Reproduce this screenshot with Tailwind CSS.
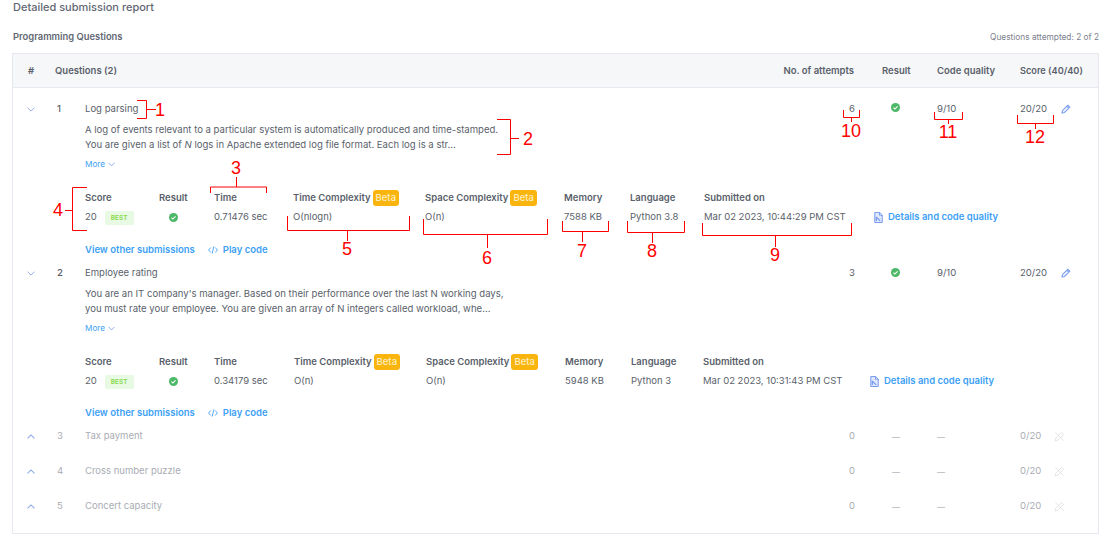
<!DOCTYPE html>
<html lang="en">
<head>
    <meta charset="UTF-8">
    <title>Detailed submission report</title>
    <script src="https://cdn.jsdelivr.net/npm/@tailwindcss/browser@4"></script>
</head>
<body class="bg-white font-['Inter',sans-serif] text-[#5a5f6b] overflow-hidden">
<svg class="hidden">
    <symbol id="check" viewBox="0 0 16 16"><circle cx="8" cy="8" r="8" fill="#4cb868"/><path d="M4.4 8.2l2.5 2.5 4.7-4.8" fill="none" stroke="#fff" stroke-width="2"/></symbol>
    <symbol id="pencil" viewBox="0 0 16 16"><path d="M11 2l3 3-8.6 8.6-3.8.9.8-3.9zM9.4 3.6l3 3" fill="none" stroke="currentColor" stroke-width="1.8" stroke-linejoin="round"/></symbol>
    <symbol id="nopencil" viewBox="0 0 16 16"><path d="M11 2l3 3-8.6 8.6-3.8.9.8-3.9zM2 2l12 12" fill="none" stroke="currentColor" stroke-width="1.1" stroke-linejoin="round"/></symbol>
    <symbol id="down" viewBox="0 0 10 6"><path d="M.7.7L5 5l4.3-4.3" fill="none" stroke="currentColor" stroke-width="1.1"/></symbol>
    <symbol id="up" viewBox="0 0 10 6"><path d="M.7 5.3L5 1l4.3 4.3" fill="none" stroke="currentColor" stroke-width="1.3"/></symbol>
    <symbol id="doc" viewBox="0 0 10 13"><path d="M.6.6h5.8l3 3v8.8H.6zM6.2.8v3h3" fill="#dfe7fb" stroke="currentColor" stroke-width="1.1"/><path d="M2.4 5.5v5M2.4 6l4.6 4.6" fill="none" stroke="currentColor" stroke-width="1.3"/></symbol>
    <symbol id="code" viewBox="0 0 10 8"><path d="M2.8 1.5L.6 4l2.2 2.5M7.2 1.5L9.4 4 7.2 6.5M5.8.5L4.2 7.5" fill="none" stroke="currentColor" stroke-width=".9"/></symbol>
</svg>

<div class="relative w-[1107px] h-[544px]">
    <div class="pl-[12px] pr-[8px] pt-[1px]">
        <h1 class="ml-[1px] h-[12px] text-[11px] leading-[12px] font-medium text-[#626773]">Detailed submission report</h1>
        <div class="mt-[18px] h-[12px] flex items-center justify-between">
            <h2 class="ml-[1px] text-[9.4px] font-semibold text-[#626773]">Programming Questions</h2>
            <span class="text-[8.3px] text-[#7c818c]">Questions attempted: 2 of 2</span>
        </div>

        <div class="mt-[10px] h-[481px] border border-[#e6e7ef]">
            <div class="grid grid-cols-[15px_27px_1fr_99px_55px_83px_78px] items-center h-[34px] pt-[1px] bg-[#f6f7f9] border-b border-[#e9eaf1] text-[9.5px] font-semibold text-[#5a5f6b]">
                <span class="col-start-2">#</span>
                <span>Questions (2)</span>
                <span class="pr-[28px] text-right">No. of attempts</span>
                <span>Result</span>
                <span>Code quality</span>
                <span class="text-[9.2px]">Score (40/40)</span>
            </div>

            <!-- question 1 -->
            <div class="h-[178px] text-[9.55px]">
                <div class="grid grid-cols-[44px_28px_1fr_99px_55px_83px_78px] pt-[14px] items-center leading-[14px]">
                    <svg class="ml-[14px] w-[8px] h-[5px] text-[#8aa6ea]"><use href="#down"/></svg>
                    <span class="font-medium">1</span>
                    <span>Log parsing</span>
                    <span class="pr-[27px] text-right">6</span>
                    <svg class="ml-[9px] -mt-[4px] w-[9px] h-[9px]"><use href="#check"/></svg>
                    <span>9/10</span>
                    <span class="flex items-center gap-[14px]">20/20 <svg class="w-[10px] h-[10px] text-[#7ba0f0]"><use href="#pencil"/></svg></span>
                </div>
                <p class="ml-[72px] mt-[6px] leading-[15px]">A log of events relevant to a particular system is automatically produced and time-stamped.<br>You are given a list of <i>N</i> logs in Apache extended log file format. Each log is a str...</p>
                <a class="ml-[72px] mt-[6px] flex items-center gap-[3px] h-[12px] text-[8.2px] text-[#3d9ff5]">More <svg class="w-[7px] h-[5px] text-[#6f94ee]"><use href="#down"/></svg></a>
                <div class="ml-[72px] mt-[20px] grid grid-cols-[74px_55px_79px_132px_139px_66px_74px_170px_auto] items-center text-[9.5px]">
                    <span class="font-semibold">Score</span>
                    <span class="font-semibold">Result</span>
                    <span class="font-semibold">Time</span>
                    <span class="flex items-center gap-[2px] font-semibold">Time Complexity <b class="px-[3px] h-[16px] rounded-[3px] bg-[#f9b50d] text-[#ffeec2] font-medium leading-[16px]">Beta</b></span>
                    <span class="flex items-center gap-[2px] font-semibold">Space Complexity <b class="px-[3px] h-[16px] rounded-[3px] bg-[#f9b50d] text-[#ffeec2] font-medium leading-[16px]">Beta</b></span>
                    <span class="font-semibold">Memory</span>
                    <span class="font-semibold">Language</span>
                    <span class="font-semibold">Submitted on</span>
                </div>
                <div class="ml-[72px] mt-[4px] h-[15px] grid grid-cols-[74px_55px_79px_132px_139px_66px_74px_170px_auto] items-center text-[9.5px]">
                    <span class="flex items-center gap-[8px]">20 <b class="px-[6px] h-[14px] rounded-[2px] bg-[#e8fae4] text-[#86d94a] text-[6.5px] font-semibold leading-[14px]">BEST</b></span>
                    <svg class="ml-[10px] w-[9px] h-[9px]"><use href="#check"/></svg>
                    <span>0.71476 sec</span>
                    <span>O(nlogn)</span>
                    <span>O(n)</span>
                    <span>7588 KB</span>
                    <span>Python 3.8</span>
                    <span>Mar 02 2023, 10:44:29 PM CST</span>
                    <a class="flex items-center gap-[5px] font-semibold text-[#3d9ff5]"><svg class="w-[9px] h-[11px] text-[#6f94ee]"><use href="#doc"/></svg>Details and code quality</a>
                </div>
                <div class="ml-[72px] mt-[19px] flex items-center gap-[13px] h-[12px] text-[9.5px] font-semibold text-[#3d9ff5]">
                    <a>View other submissions</a>
                    <a class="flex items-center gap-[5px]"><svg class="w-[10px] h-[8px]"><use href="#code"/></svg> Play code</a>
                </div>
            </div>

            <!-- question 2 -->
            <div class="h-[153px] text-[9.55px]">
                <div class="grid grid-cols-[44px_28px_1fr_99px_55px_83px_78px] items-center leading-[14px]">
                    <svg class="ml-[14px] w-[8px] h-[5px] text-[#8aa6ea]"><use href="#down"/></svg>
                    <span class="font-medium">2</span>
                    <span>Employee rating</span>
                    <span class="pr-[27px] text-right">3</span>
                    <svg class="ml-[9px] -mt-[2px] w-[9px] h-[9px]"><use href="#check"/></svg>
                    <span>9/10</span>
                    <span class="flex items-center gap-[14px]">20/20 <svg class="w-[10px] h-[10px] text-[#7ba0f0]"><use href="#pencil"/></svg></span>
                </div>
                <p class="ml-[72px] mt-[7px] leading-[14.5px]">You are an IT company's manager. Based on their performance over the last N working days,<br>you must rate your employee. You are given an array of N integers called workload, whe...</p>
                <a class="ml-[72px] mt-[6px] flex items-center gap-[3px] h-[12px] text-[8.2px] text-[#3d9ff5]">More <svg class="w-[7px] h-[5px] text-[#6f94ee]"><use href="#down"/></svg></a>
                <div class="ml-[72px] mt-[20px] grid grid-cols-[74px_55px_80px_132px_139px_66px_72px_167px_auto] items-center text-[9.5px]">
                    <span class="font-semibold">Score</span>
                    <span class="font-semibold">Result</span>
                    <span class="font-semibold">Time</span>
                    <span class="flex items-center gap-[2px] font-semibold">Time Complexity <b class="px-[3px] h-[16px] rounded-[3px] bg-[#f9b50d] text-[#ffeec2] font-medium leading-[16px]">Beta</b></span>
                    <span class="flex items-center gap-[2px] font-semibold">Space Complexity <b class="px-[3px] h-[16px] rounded-[3px] bg-[#f9b50d] text-[#ffeec2] font-medium leading-[16px]">Beta</b></span>
                    <span class="font-semibold">Memory</span>
                    <span class="font-semibold">Language</span>
                    <span class="font-semibold">Submitted on</span>
                </div>
                <div class="ml-[72px] mt-[4px] h-[15px] grid grid-cols-[74px_55px_80px_132px_139px_66px_72px_167px_auto] items-center text-[9.5px]">
                    <span class="flex items-center gap-[8px]">20 <b class="px-[6px] h-[14px] rounded-[2px] bg-[#e8fae4] text-[#86d94a] text-[6.5px] font-semibold leading-[14px]">BEST</b></span>
                    <svg class="ml-[10px] w-[9px] h-[9px]"><use href="#check"/></svg>
                    <span>0.34179 sec</span>
                    <span>O(n)</span>
                    <span>O(n)</span>
                    <span>5948 KB</span>
                    <span>Python 3</span>
                    <span>Mar 02 2023, 10:31:43 PM CST</span>
                    <a class="flex items-center gap-[5px] font-semibold text-[#3d9ff5]"><svg class="w-[9px] h-[11px] text-[#6f94ee]"><use href="#doc"/></svg>Details and code quality</a>
                </div>
                <div class="ml-[72px] mt-[18px] flex items-center gap-[13px] h-[12px] text-[9.5px] font-semibold text-[#3d9ff5]">
                    <a>View other submissions</a>
                    <a class="flex items-center gap-[5px]"><svg class="w-[10px] h-[8px]"><use href="#code"/></svg> Play code</a>
                </div>
            </div>

            <!-- not attempted -->
            <div class="text-[9.5px] text-[#a9acb4]">
                <div class="grid grid-cols-[44px_28px_1fr_99px_55px_83px_78px] items-center h-[35px]">
                    <svg class="ml-[14px] w-[8px] h-[5px] text-[#8aa6ea]"><use href="#up"/></svg>
                    <span>3</span>
                    <span>Tax payment</span>
                    <span class="pr-[27px] text-right">0</span>
                    <span class="ml-[10px] text-[8px] text-[#a9acb4]">—</span>
                    <span class="text-[8px] text-[#a9acb4]">—</span>
                    <span class="flex items-center gap-[13px]">0/20 <svg class="w-[11px] h-[11px] text-[#dcdde1]"><use href="#nopencil"/></svg></span>
                </div>
                <div class="grid grid-cols-[44px_28px_1fr_99px_55px_83px_78px] items-center h-[35px]">
                    <svg class="ml-[14px] w-[8px] h-[5px] text-[#8aa6ea]"><use href="#up"/></svg>
                    <span>4</span>
                    <span>Cross number puzzle</span>
                    <span class="pr-[27px] text-right">0</span>
                    <span class="ml-[10px] text-[8px] text-[#a9acb4]">—</span>
                    <span class="text-[8px] text-[#a9acb4]">—</span>
                    <span class="flex items-center gap-[13px]">0/20 <svg class="w-[11px] h-[11px] text-[#dcdde1]"><use href="#nopencil"/></svg></span>
                </div>
                <div class="grid grid-cols-[44px_28px_1fr_99px_55px_83px_78px] items-center h-[35px]">
                    <svg class="ml-[14px] w-[8px] h-[5px] text-[#8aa6ea]"><use href="#up"/></svg>
                    <span>5</span>
                    <span>Concert capacity</span>
                    <span class="pr-[27px] text-right">0</span>
                    <span class="ml-[10px] text-[8px] text-[#a9acb4]">—</span>
                    <span class="text-[8px] text-[#a9acb4]">—</span>
                    <span class="flex items-center gap-[13px]">0/20 <svg class="w-[11px] h-[11px] text-[#dcdde1]"><use href="#nopencil"/></svg></span>
                </div>
            </div>
        </div>
    </div>

    <!-- red annotations drawn over the screenshot -->
    <svg class="absolute inset-0 w-[1107px] h-[544px] pointer-events-none" viewBox="0 0 1107 544" fill="none" stroke="#f00" stroke-width="1">
        <path d="M137 100.5h9.5v18H137M146.5 109.5H156"/>
        <path d="M497 119.5h13.5v35H497M510.5 138.5H519"/>
        <path d="M210.5 193v-6h56v6M236.5 187v-10"/>
        <path d="M87 187.5H72.5v43H87M72.5 210.5H65"/>
        <path d="M287.5 216v14.5h122V216M347.5 230v11"/>
        <path d="M423.5 219v15.5h124V219M487.5 234v14"/>
        <path d="M562.5 221v10.5h46V221M582.5 231v11"/>
        <path d="M627.5 221v11.5h57V221M652.5 232v11"/>
        <path d="M702.5 223v12.5h149V223M775.5 235v12"/>
        <path d="M843.5 110v7.5h16V110M851.5 117v5"/>
        <path d="M934.5 112v7.5h28V112M948.5 119v5"/>
        <path d="M1017.5 115v8.5h36V115M1035.5 123v6"/>
        <g fill="#f00" stroke="none" font-family="Liberation Sans, sans-serif" font-size="18" text-anchor="middle">
            <text x="160" y="116">1</text>
            <text x="528" y="145">2</text>
            <text x="236" y="174">3</text>
            <text x="58" y="216">4</text>
            <text x="347" y="255">5</text>
            <text x="487" y="264">6</text>
            <text x="582" y="257">7</text>
            <text x="652" y="257">8</text>
            <text x="775" y="261">9</text>
            <text x="851" y="137">10</text>
            <text x="948" y="138">11</text>
            <text x="1035" y="143">12</text>
        </g>
    </svg>
</div>
</body>
</html>
